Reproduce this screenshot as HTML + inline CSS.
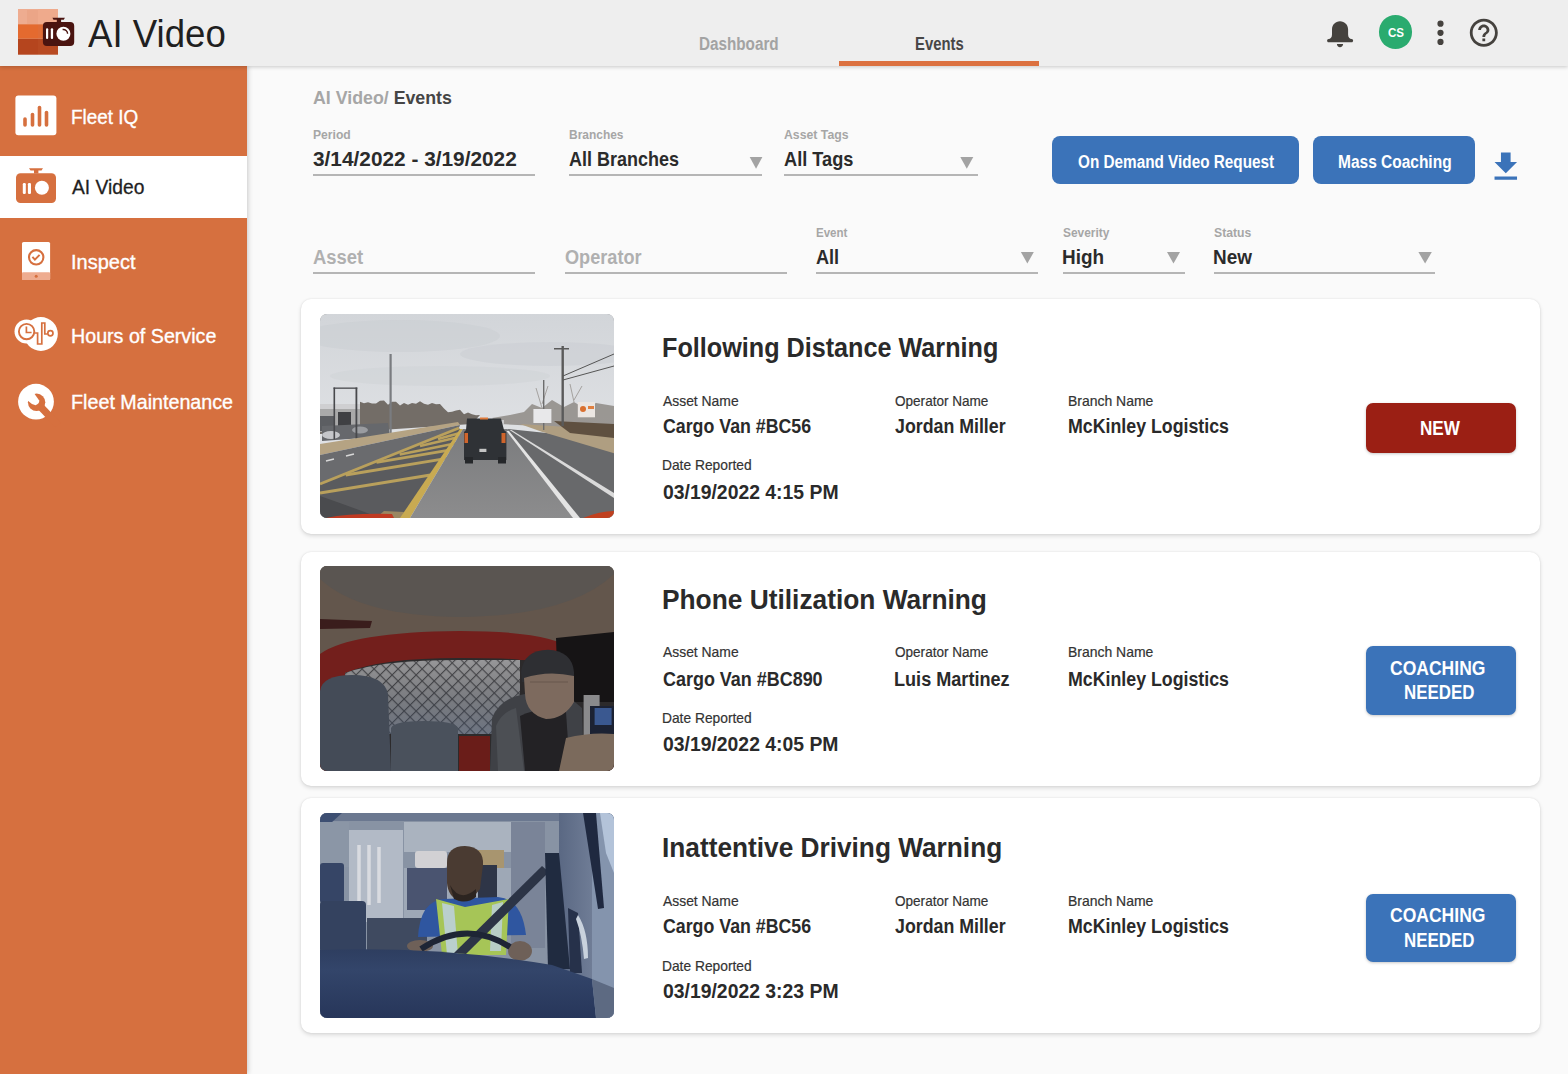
<!DOCTYPE html>
<html><head><meta charset="utf-8">
<style>
*{box-sizing:border-box;margin:0;padding:0}
html,body{width:1568px;height:1074px;overflow:hidden;background:#fafafa;font-family:"Liberation Sans",sans-serif;position:relative}
.a{position:absolute}
.t{position:absolute;white-space:nowrap;line-height:1;transform-origin:0 0;z-index:10}
svg.a{overflow:visible}
#hdr{left:0;top:0;width:1568px;height:66px;background:#eeeeee;box-shadow:0 1px 4px rgba(0,0,0,.2);z-index:3}
#side{left:0;top:66px;width:247px;height:1008px;background:#d6703f;box-shadow:1px 0 5px rgba(0,0,0,.2);z-index:2}
.ul{position:absolute;height:2px;background:#b5b5b5}
.card{position:absolute;left:301px;width:1239px;background:#fff;border-radius:10px;box-shadow:0 2px 4px rgba(0,0,0,.13),0 0 2px rgba(0,0,0,.1)}
.img{position:absolute;left:320px;width:294px;height:204px;border-radius:7px;overflow:hidden;z-index:5}
.btn{position:absolute;border-radius:7px;box-shadow:0 1px 3px rgba(0,0,0,.22);z-index:5}
</style></head><body>
<div id="hdr" class="a">
  <!-- logo -->
  <svg class="a" style="left:0;top:0" width="90" height="66" viewBox="0 0 90 66">
    <rect x="18" y="9" width="20" height="15.2" fill="#eeac90"/>
    <rect x="38" y="9" width="20" height="15.2" fill="#efaa8c"/>
    <rect x="27" y="10" width="11" height="14" fill="#e9a082" opacity=".6"/>
    <rect x="18" y="24.2" width="20" height="14.6" fill="#e46a2f"/>
    <rect x="38" y="24.2" width="20" height="14.6" fill="#e06c36"/>
    <rect x="18" y="38.8" width="20" height="15.9" fill="#b5451e"/>
    <rect x="38" y="38.8" width="20" height="15.9" fill="#b84a22"/>
    <path d="M52.4 17.8 H64.9 L63.8 19.8 H61.1 V22.5 H56.8 V19.8 H53.5 Z" fill="#4a1410"/>
    <rect x="42.9" y="21.9" width="31.3" height="24.1" rx="4" fill="#4a1410"/>
    <rect x="46" y="28.3" width="2.2" height="10.7" rx="1" fill="#fff"/>
    <rect x="50.8" y="28.3" width="2.3" height="10.7" rx="1" fill="#fff"/>
    <circle cx="63.4" cy="33.8" r="7" fill="#fff"/>
    <path d="M62.6 29.5 A4.3 4.3 0 0 1 67.6 33.8" stroke="#4a1410" stroke-width="1.4" fill="none"/>
  </svg>
  <div class="a" style="left:839px;top:61px;width:200px;height:5px;background:#dc7140"></div>
  <!-- bell -->
  <svg class="a" style="left:1320px;top:15px" width="40" height="37" viewBox="0 0 40 37">
    <path d="M20,6.2 C15.3,6.2 12,9.8 12,14.5 L12,19.5 C12,22.5 10.5,23.8 8.6,24.1 C7.6,24.3 7.1,25 7.1,25.7 C7.1,26.5 7.7,27.2 8.5,27.2 L31.7,27.2 C32.5,27.2 33.1,26.5 33.1,25.7 C33.1,25 32.6,24.3 31.6,24.1 C29.7,23.8 28.1,22.5 28.1,19.5 L28.1,14.5 C28.1,9.8 24.7,6.2 20,6.2 Z M16.9,29.1 L23.1,29.1 C23.1,31 21.7,32.2 20,32.2 C18.3,32.2 16.9,31 16.9,29.1 Z" fill="#45423e"/>
  </svg>
  <!-- avatar -->
  <div class="a" style="left:1378.8px;top:15.2px;width:33.6px;height:33.6px;border-radius:50%;background:#2aab6f"></div>
  <!-- dots -->
  <svg class="a" style="left:1430px;top:15px" width="22" height="36" viewBox="0 0 22 36">
    <circle cx="10.5" cy="8.7" r="3.1" fill="#45423e"/><circle cx="10.5" cy="17.8" r="3.1" fill="#45423e"/><circle cx="10.5" cy="26.9" r="3.1" fill="#45423e"/>
  </svg>
  <!-- help -->
  <svg class="a" style="left:1466.7px;top:16.4px" width="33.6" height="33.6" viewBox="0 0 24 24">
    <path fill="#45423e" d="M11 18h2v-2h-2v2zm1-16C6.48 2 2 6.48 2 12s4.48 10 10 10 10-4.48 10-10S17.52 2 12 2zm0 18c-4.41 0-8-3.59-8-8s3.59-8 8-8 8 3.59 8 8-3.59 8-8 8zm0-14c-2.21 0-4 1.79-4 4h2c0-1.1.9-2 2-2s2 .9 2 2c0 2-3 1.75-3 5h2c0-2.25 3-2.5 3-5 0-2.21-1.79-4-4-4z"/>
  </svg>
</div>

<div id="side" class="a"></div>
<div class="a" style="left:0;top:156px;width:247px;height:62px;background:#fff;z-index:4"></div>
<svg class="a" style="left:0;top:66px;z-index:6" width="247" height="400" viewBox="0 66 247 400">
  <!-- Fleet IQ -->
  <rect x="15.4" y="95.4" width="41" height="39.8" rx="3" fill="#fff"/>
  <g stroke="#d6703f" stroke-width="3.6" stroke-linecap="round">
    <line x1="25" y1="119" x2="25" y2="125"/>
    <line x1="32.5" y1="114.6" x2="32.5" y2="125"/>
    <line x1="39.5" y1="107.6" x2="39.5" y2="125"/>
    <line x1="46.5" y1="112.5" x2="46.5" y2="125"/>
  </g>
  <!-- AI video (orange on white) -->
  <path d="M29 168.2 H43 L41.5 170.6 H38.4 V173.6 H34 V170.6 H30.5 Z" fill="#d6703f"/>
  <rect x="16" y="173.3" width="40" height="29.7" rx="4.5" fill="#d6703f"/>
  <rect x="22.8" y="183" width="3" height="11" rx="1.2" fill="#fff"/>
  <rect x="27.9" y="183" width="3.1" height="11" rx="1.2" fill="#fff"/>
  <circle cx="41.9" cy="187.8" r="7" fill="#fff"/>
  <!-- Inspect -->
  <rect x="22" y="242" width="28.1" height="37.9" rx="1.6" fill="#fff"/>
  <rect x="22" y="272.2" width="28.1" height="7.7" rx="1" fill="#eeac90"/>
  <circle cx="36.2" cy="276.2" r="1.5" fill="#d6703f"/>
  <circle cx="36.2" cy="257.3" r="7.2" stroke="#d6703f" stroke-width="2.1" fill="none"/>
  <path d="M32.4 256.9 L34.9 259.6 L39.6 254.9" stroke="#d6703f" stroke-width="2" fill="none"/>
  <!-- Hours of service -->
  <circle cx="26.5" cy="331.6" r="12" fill="#fff"/>
  <circle cx="40.9" cy="334" r="16.9" fill="#fff"/>
  <circle cx="26.6" cy="331.6" r="7.7" stroke="#d6703f" stroke-width="1.9" fill="none"/>
  <path d="M26.4 326.6 V332.5 H31.6" stroke="#d6703f" stroke-width="1.7" fill="none"/>
  <path d="M34.2 333 H37.6 V344 H41.8 V323 H44.8 V334 H47.2" stroke="#d6703f" stroke-width="1.7" fill="none"/>
  <circle cx="50.4" cy="333.3" r="2.6" stroke="#d6703f" stroke-width="1.7" fill="none"/>
  <!-- Wrench -->
  <circle cx="36" cy="401.7" r="17.9" fill="#fff"/>
  <path d="M37 403 L58 425" stroke="#d6703f" stroke-width="7.4"/>
  <circle cx="36.6" cy="402.3" r="8.7" fill="#d6703f"/>
  <path d="M30.5 390 L34.6 394.1 L39.2 400.6 Q39.6 403.6 35.6 405.3 Q31 404 27.9 400.7 L24 396.5 Z" fill="#fff"/>
</svg>

<!-- filters: underlines & arrows -->
<div class="ul" style="left:313px;top:174.2px;width:222.2px"></div>
<div class="ul" style="left:569px;top:174.2px;width:193.4px"></div>
<div class="ul" style="left:784.3px;top:174.2px;width:193.3px"></div>
<div class="ul" style="left:312.8px;top:272.4px;width:222.5px"></div>
<div class="ul" style="left:564.7px;top:272.4px;width:222.2px"></div>
<div class="ul" style="left:816px;top:272.4px;width:222px"></div>
<div class="ul" style="left:1062.7px;top:272.4px;width:122px"></div>
<div class="ul" style="left:1213.7px;top:272.4px;width:221.7px"></div>
<svg class="a" style="left:0;top:0" width="1568" height="290">
  <g fill="#a3a3a3">
    <path d="M749.7 157 H762.4 L756.05 168.8 Z"/>
    <path d="M960.3 157 H973.3 L966.8 168.8 Z"/>
    <path d="M1020.9 252 H1033.8 L1027.35 263.6 Z"/>
    <path d="M1167 252 H1180 L1173.5 263.6 Z"/>
    <path d="M1418.4 252 H1431.8 L1425.1 263.6 Z"/>
  </g>
  <path fill="#3b73b9" transform="translate(1486.5 147.6) scale(1.607)" d="M19 9h-4V3H9v6H5l7 7 7-7zM5 18v2h14v-2H5z"/>
</svg>
<div class="btn" style="left:1052.4px;top:136.3px;width:246.3px;height:48.1px;background:#3b73b9;box-shadow:none;border-radius:8px"></div>
<div class="btn" style="left:1313.3px;top:136.3px;width:162px;height:48.1px;background:#3b73b9;box-shadow:none;border-radius:8px"></div>

<!-- cards -->
<div class="card" style="top:298.8px;height:235px"></div>
<div class="card" style="top:552px;height:234px"></div>
<div class="card" style="top:798.1px;height:234.8px"></div>
<div class="img" id="img1" style="top:313.8px;height:204.5px;background:#8a8c8e"><svg width="294" height="204" viewBox="0 0 294 204" style="display:block">
<defs>
<linearGradient id="p1sky" x1="0" y1="0" x2="0" y2="1"><stop offset="0" stop-color="#d2d5d9"/><stop offset=".6" stop-color="#dfe1e4"/><stop offset="1" stop-color="#e6e7ea"/></linearGradient>
<linearGradient id="p1lane" x1="0" y1="0" x2="0" y2="1"><stop offset="0" stop-color="#7b7c7e"/><stop offset="1" stop-color="#8c8c8d"/></linearGradient>
</defs>
<rect width="294" height="204" fill="url(#p1sky)"/>
<ellipse cx="80" cy="22" rx="100" ry="16" fill="#cacdd2" opacity=".5"/>
<ellipse cx="230" cy="40" rx="90" ry="12" fill="#cbced3" opacity=".6"/>
<ellipse cx="120" cy="62" rx="110" ry="10" fill="#d0d3d7" opacity=".6"/>
<!-- tree line left -->
<path d="M40 100 L40 87.7 L44 89.2 L48 88.3 L52 89.5 L56 89.6 L60 86.8 L64 86.6 L68 90.7 L72 87.8 L76 87.7 L80 91.5 L84 88.9 L88 90.7 L92 88.9 L96 89.7 L100 87.3 L104 89.7 L108 90.8 L112 89.1 L116 90.2 L120 89.9 L124 94.4 L128 98.2 L132 97.7 L136 96.6 L140 95.7 L144 100.2 L148 98.6 L152 100.2 L156 101.3 L160 100.9 L152 110 L0 120 L0 100 Z" fill="#736d67"/>
<!-- trees right (sparse) -->
<path d="M172 104 L190 101 L204 98 L212 90 L222 94 L232 86 L244 93 L254 88 L264 94 L276 89 L294 92 L294 116 L180 110 Z" fill="#8a857f" opacity=".8"/>
<g stroke="#8f8a85" stroke-width="1" opacity=".7"><path d="M222 94 L216 74 M222 90 L228 72 M254 88 L250 70 M254 86 L262 72"/></g>
<!-- left building -->
<rect x="0" y="90" width="40" height="28" fill="#a9a9a9"/>
<rect x="0" y="90" width="40" height="5" fill="#cfcfd1"/>
<rect x="18" y="98" width="13" height="17" fill="#3f4043"/>
<rect x="0" y="102" width="14" height="15" fill="#5c5e62"/>
<!-- parked cars -->
<path d="M2 112 L68 109 L70 122 L2 127 Z" fill="#66686c"/>
<ellipse cx="11" cy="121" rx="9" ry="4" fill="#c5c6ca"/>
<ellipse cx="40" cy="116" rx="8" ry="3.5" fill="#9a9ca0"/>
<!-- sign frame & poles -->
<rect x="13.5" y="73.5" width="1.6" height="52" fill="#48494c"/>
<rect x="35.5" y="73.5" width="1.8" height="52" fill="#48494c"/>
<rect x="13.5" y="73.5" width="23.8" height="1.3" fill="#48494c"/>
<rect x="69.5" y="40" width="2.2" height="79" fill="#7a7c80"/>
<!-- left sidewalk -->
<path d="M0 130 L138 108 L140 111 L0 141 Z" fill="#b5a383"/>
<!-- left lane -->
<path d="M0 141 L140 111 L139 114 L0 170 Z" fill="#6a6b6e"/>
<g stroke="#d8d8d8" stroke-width="1.4"><line x1="6" y1="147" x2="14" y2="145"/><line x1="26" y1="142" x2="34" y2="140"/></g>
<!-- hatch area -->
<path d="M0 170 L139 114 L141 117 L84 204 L0 204 Z" fill="#5a5b5e"/>
<path d="M0 182 Q40 196 60 204 L0 204 Z" fill="#4a4b4e"/>
<g stroke="#b9a05c" stroke-width="2.8" fill="none">
<line x1="0" y1="170" x2="139" y2="114"/>
<line x1="0" y1="179" x2="110.5" y2="161"/>
<line x1="25.7" y1="161" x2="127" y2="144.4"/>
<line x1="56.5" y1="148.3" x2="133.7" y2="135.4"/>
<line x1="79.7" y1="140.5" x2="137.5" y2="129"/>
<line x1="100" y1="132" x2="139" y2="123"/>
<line x1="118" y1="125" x2="140" y2="119"/>
</g>
<path d="M56 204 L64 197 L84 198 L82 204 Z" fill="#b59a62" opacity=".7"/>
<!-- double yellow -->
<path d="M140 115 L143 115 L90 204 L80 204 Z" fill="#c8aa52"/>
<!-- own lane -->
<path d="M143 115 L187 115 L257 204 L90 204 Z" fill="url(#p1lane)"/>
<!-- right lanes -->
<path d="M187 115 L294 126 L294 204 L257 204 Z" fill="#68696b"/>
<path d="M186.5 117 L189 117 L260 204 L253 204 Z" fill="#e4e4e4"/>
<path d="M189.5 116 L191.5 116 L294 179 L294 184 Z" fill="#dadada"/>
<!-- right shoulder -->
<path d="M200 110 L294 116 L294 139.3 L221 117.4 Z" fill="#af9e81"/>
<path d="M234 107 L294 110 L294 124 L250 119 Z" fill="#5f5040"/>
<!-- poles right -->
<rect x="241.5" y="32" width="2.4" height="80" fill="#5a5a5a"/>
<rect x="234" y="34" width="15" height="1.5" fill="#5a5a5a"/>
<rect x="223" y="66" width="1.4" height="50" fill="#6d6d6d"/>
<path d="M243 62 L294 40 M243 66 L294 52" stroke="#555" stroke-width="1" fill="none"/>
<!-- white truck / sign -->
<rect x="213.4" y="95" width="18" height="14" fill="#e8e8ea"/>
<rect x="257.8" y="88" width="17.2" height="15.3" fill="#ebe6e2"/>
<circle cx="263" cy="95" r="3" fill="#d9702f"/>
<rect x="268" y="92" width="6" height="3" fill="#e08040"/>
<!-- far vehicles -->
<rect x="176" y="106" width="8" height="4" fill="#c9c9cb"/>
<!-- truck -->
<path d="M147 104.6 L181 104.6 L184 116 L186.4 118 L186.4 146 L144 146 L144 118 L146 116 Z" fill="#2f3236"/>
<rect x="145" y="143" width="8" height="6.5" fill="#25272a"/>
<rect x="178" y="143" width="8" height="6.5" fill="#25272a"/>
<rect x="144.5" y="119" width="3.5" height="10" fill="#d0652c"/>
<rect x="181.5" y="119" width="4" height="10" fill="#d0652c"/>
<rect x="159.4" y="134.8" width="7" height="3.2" fill="#c4c4c4"/>
<rect x="160" y="103.5" width="8" height="2" fill="#e07a3a"/>
<!-- dashboard edges -->
<path d="M6 204 Q30 199 72 200 L74 204 Z" fill="#c03a22"/>
<path d="M263 204 Q280 197 294 197 L294 204 Z" fill="#c0401f"/>
</svg></div>
<div class="img" id="img2" style="top:566px;height:205px;background:#4a4642"><svg width="294" height="205" viewBox="0 0 294 205" style="display:block">
<defs>
<pattern id="mesh" width="8.5" height="8.5" patternUnits="userSpaceOnUse" patternTransform="rotate(45)">
<rect width="8.5" height="8.5" fill="#979799"/><path d="M0 0 H8.5 M0 0 V8.5" stroke="#4a4a4d" stroke-width="2.2"/>
</pattern>
<linearGradient id="p2m" x1="0" y1="0" x2="0" y2="1"><stop offset="0" stop-color="#000" stop-opacity="0"/><stop offset="1" stop-color="#3a4a66" stop-opacity=".45"/></linearGradient>
</defs>
<rect width="294" height="205" fill="#63564c"/>
<path d="M0 0 H294 V8 Q250 50 140 51 Q40 50 0 13 Z" fill="#5a5551"/>
<path d="M0 53 L52 55 L50 62 L0 63 Z" fill="#3a1d1c"/>
<path d="M0 88 Q30 66 140 65 Q230 65 254 84 L294 84 L294 205 L0 205 Z" fill="#731f1c"/>
<path d="M25 205 L25 107 Q60 92 140 92 Q190 92 200 94 L294 96 L294 205 Z" fill="#2c2a2b"/>
<path d="M25 168 L25 107 Q60 94 140 94 L200 94 L200 168 Z" fill="url(#mesh)"/>
<path d="M25 168 L25 107 Q60 94 140 94 L200 94 L200 168 Z" fill="url(#p2m)"/>
<path d="M0 205 L0 125 Q2 109 32 109 Q64 109 68 128 L71 205 Z" fill="#444b57"/>
<path d="M71 205 L71 162 Q74 155 104 155 Q135 155 138 162 L138 205 Z" fill="#4a515c"/>
<rect x="139" y="170" width="31" height="35" fill="#6a1d19"/>
<path d="M236 72 L294 66 L294 136 L238 136 Z" fill="#161415"/>
<path d="M170 205 L172 152 Q180 132 205 128 L250 132 L262 142 L264 205 Z" fill="#3f4146"/>
<path d="M200 150 Q220 140 246 146 L250 205 L205 205 Z" fill="#232225"/>
<path d="M176 160 Q182 146 196 142 L204 205 L178 205 Z" fill="#4c4f54"/>
<path d="M201 106 Q204 84 228 83.8 Q252 85 254 106 L254 116 L202 116 Z" fill="#2e2f33"/>
<path d="M204 112 Q228 104 254 110 L254 136 Q244 153 226 153 Q206 148 205 128 Z" fill="#7d6a5e"/>
<path d="M210 116 H248" stroke="#5a4a42" stroke-width="1" opacity=".6"/>
<rect x="263.6" y="129" width="16" height="42.5" fill="#8a8a8c"/>
<rect x="270" y="140" width="24" height="34" fill="#1c2233"/>
<rect x="274.6" y="142" width="17" height="17" fill="#3a5890"/>
<path d="M239 205 L246 172 Q270 166 294 168 L294 205 Z" fill="#7b6a5c"/>
</svg></div>
<div class="img" id="img3" style="top:813px;height:205px;background:#3a4a66"><svg width="294" height="205" viewBox="0 0 294 205" style="display:block">
<defs>
<linearGradient id="p3dash" x1="0" y1="0" x2="0" y2="1"><stop offset="0" stop-color="#2e3e60"/><stop offset=".3" stop-color="#33456a"/><stop offset="1" stop-color="#27365a"/></linearGradient>
<linearGradient id="p3r" x1="0" y1="0" x2="1" y2="0"><stop offset="0" stop-color="#5a6883"/><stop offset="1" stop-color="#7d8aa2"/></linearGradient>
</defs>
<rect width="294" height="205" fill="#8893a4"/>
<rect width="294" height="8" fill="#6b7890"/><path d="M0 0 L22 0 L0 20 Z" fill="#3d4f72"/>
<rect x="0" y="9" width="29" height="45" fill="#8b96a6"/>
<rect x="29" y="17" width="54" height="92" fill="#b2bac6"/>
<g stroke="#d9dbe0" stroke-width="3.5"><line x1="39" y1="32" x2="39" y2="90"/><line x1="49" y1="32" x2="49" y2="92"/><line x1="59" y1="34" x2="59" y2="90"/></g>
<rect x="84" y="9" width="108" height="30" fill="#aab3bf"/>
<rect x="95" y="38" width="32" height="17" rx="3" fill="#d2d1d4"/>
<rect x="158" y="37" width="26" height="48" fill="#a8956f"/>
<rect x="84" y="55" width="108" height="50" fill="#9ea8b6"/>
<rect x="0" y="50" width="24" height="40" rx="3" fill="#364566"/>
<rect x="0" y="88" width="46" height="52" rx="4" fill="#34425f"/>
<rect x="47" y="105" width="60" height="35" fill="#3f4a60"/>
<rect x="87" y="55" width="40" height="42" fill="#4a5470"/>
<rect x="158" y="52" width="19" height="34" fill="#2e3547"/>
<rect x="191" y="9" width="34" height="126" fill="#7a8498"/>
<path d="M98 124 Q100 88 124 86 L178 84 Q202 86 206 122 Z" fill="#2f56a0"/>
<path d="M116 86 L145 94 L189 86 L186 142 L122 142 Z" fill="#a6c557"/>
<path d="M122 90 L134 93 L138 142 L127 142 Z" fill="#bdd0e2" opacity=".85"/>
<path d="M172 92 L183 89 L181 138 L170 138 Z" fill="#bdd0e2" opacity=".8"/>
<path d="M127 50 Q127 33 145 33 Q164 34 163 52 L160 76 Q150 90 140 88 Q128 84 127 70 Z" fill="#4a3b32"/>
<path d="M130 72 Q140 90 156 76 L156 84 Q146 92 134 86 Z" fill="#2c2420"/>
<path d="M222 53 L229 59 L146 141 L134 140 Z" fill="#2c3446"/>
<ellipse cx="100" cy="133" rx="13" ry="6" fill="#6e6058"/>
<ellipse cx="200" cy="138" rx="12" ry="10" fill="#6e6058"/>
<path d="M101 136 Q146 106 190 134" stroke="#1e2535" stroke-width="6" fill="none"/>
<rect x="239" y="0" width="55" height="205" fill="url(#p3r)"/>
<rect x="272" y="0" width="22" height="205" fill="#8494ad"/>
<path d="M263 0 L276 0 L284 95 L278 96 Z" fill="#1f2940"/>
<path d="M280 0 L294 0 L294 60 L286 40 Z" fill="#b3c3d9"/>
<path d="M225 40 L239 40 L250 156 L228 156 Z" fill="#202b40"/>
<path d="M248 95 L258 100 L262 160 L250 160 Z" fill="#26314a"/>
<path d="M258 102 Q268 118 268 145 L264 146 Q262 122 256 106 Z" fill="#c9d2dd"/>
<path d="M0 205 L0 137 Q120 133 232 152 L272 166 L276 205 Z" fill="url(#p3dash)"/>
<path d="M272 166 L294 175 L294 205 L276 205 Z" fill="#5d6a82"/>
</svg></div>
<div class="btn" style="left:1366.4px;top:403.2px;width:149.8px;height:50.2px;background:#9b1f14"></div>
<div class="btn" style="left:1366.4px;top:646.2px;width:149.6px;height:68.9px;background:#3b73b9"></div>
<div class="btn" style="left:1366.4px;top:893.5px;width:149.6px;height:68.8px;background:#3b73b9"></div>

<div class="t" style="left:88px;top:13.52px;font-size:39.28px;font-weight:400;color:#1f1f1f;transform:scaleX(0.9327);">AI Video</div>
<div class="t" style="left:699.44px;top:36.17px;font-size:17.68px;font-weight:700;color:#a3a3a3;transform:scaleX(0.8629);">Dashboard</div>
<div class="t" style="left:915.16px;top:36.17px;font-size:17.68px;font-weight:700;color:#474747;transform:scaleX(0.8403);">Events</div>
<div class="t" style="left:1387.9px;top:26.19px;font-size:13.48px;font-weight:700;color:#ffffff;transform:scaleX(0.8597);">CS</div>
<div class="t" style="left:71.07px;top:106.75px;font-size:20.29px;font-weight:400;color:#ffffff;transform:scaleX(0.9315);-webkit-text-stroke:0.35px #ffffff;">Fleet IQ</div>
<div class="t" style="left:72px;top:176.71px;font-size:20.58px;font-weight:400;color:#1f1f1f;transform:scaleX(0.9360);-webkit-text-stroke:0.3px #1f1f1f;">AI Video</div>
<div class="t" style="left:70.71px;top:251.88px;font-size:20.14px;font-weight:400;color:#ffffff;transform:scaleX(0.9939);-webkit-text-stroke:0.35px #ffffff;">Inspect</div>
<div class="t" style="left:71.11px;top:326.87px;font-size:19.86px;font-weight:400;color:#ffffff;transform:scaleX(0.9901);-webkit-text-stroke:0.35px #ffffff;">Hours of Service</div>
<div class="t" style="left:71.1px;top:392.55px;font-size:19.71px;font-weight:400;color:#ffffff;-webkit-text-stroke:0.35px #ffffff;">Fleet Maintenance</div>
<div class="t" style="left:313.3px;top:88.24px;font-size:19.13px;font-weight:700;color:#a6a6a6;transform:scaleX(0.9297);">AI Video/ <span style="color:#454545">Events</span></div>
<div class="t" style="left:313px;top:127.57px;font-size:13.33px;font-weight:700;color:#a6a6a6;transform:scaleX(0.9097);">Period</div>
<div class="t" style="left:313px;top:148.83px;font-size:20.43px;font-weight:700;color:#2b2b2b;transform:scaleX(1.0196);">3/14/2022 - 3/19/2022</div>
<div class="t" style="left:569px;top:127.57px;font-size:13.33px;font-weight:700;color:#a6a6a6;transform:scaleX(0.8967);">Branches</div>
<div class="t" style="left:569px;top:148.83px;font-size:20.43px;font-weight:700;color:#2b2b2b;transform:scaleX(0.8812);">All Branches</div>
<div class="t" style="left:784.3px;top:127.57px;font-size:13.33px;font-weight:700;color:#a6a6a6;transform:scaleX(0.9210);">Asset Tags</div>
<div class="t" style="left:784.3px;top:148.83px;font-size:20.43px;font-weight:700;color:#2b2b2b;transform:scaleX(0.8909);">All Tags</div>
<div class="t" style="left:1078.1px;top:154.14px;font-size:17.54px;font-weight:700;color:#ffffff;transform:scaleX(0.8728);">On Demand Video Request</div>
<div class="t" style="left:1338.12px;top:154.14px;font-size:17.54px;font-weight:700;color:#ffffff;transform:scaleX(0.8834);">Mass Coaching</div>
<div class="t" style="left:312.8px;top:246.68px;font-size:20.72px;font-weight:700;color:#b0b0b0;transform:scaleX(0.8898);">Asset</div>
<div class="t" style="left:564.7px;top:246.68px;font-size:20.72px;font-weight:700;color:#b0b0b0;transform:scaleX(0.8749);">Operator</div>
<div class="t" style="left:816px;top:225.81px;font-size:13.04px;font-weight:700;color:#a6a6a6;transform:scaleX(0.8853);">Event</div>
<div class="t" style="left:816px;top:247.43px;font-size:20.72px;font-weight:700;color:#2b2b2b;transform:scaleX(0.8748);">All</div>
<div class="t" style="left:1062.7px;top:225.81px;font-size:13.04px;font-weight:700;color:#a6a6a6;transform:scaleX(0.9152);">Severity</div>
<div class="t" style="left:1061.79px;top:247.43px;font-size:20.72px;font-weight:700;color:#2b2b2b;transform:scaleX(0.9127);">High</div>
<div class="t" style="left:1213.7px;top:225.81px;font-size:13.04px;font-weight:700;color:#a6a6a6;transform:scaleX(0.9349);">Status</div>
<div class="t" style="left:1212.79px;top:247.43px;font-size:20.72px;font-weight:700;color:#2b2b2b;transform:scaleX(0.9133);">New</div>
<div class="t" style="left:661.91px;top:333.43px;font-size:28.26px;font-weight:700;color:#2a2a2a;transform:scaleX(0.8916);">Following Distance Warning</div>
<div class="t" style="left:662.5px;top:393.53px;font-size:14.78px;font-weight:400;color:#333333;transform:scaleX(0.9401);-webkit-text-stroke:0.2px #333333;">Asset Name</div>
<div class="t" style="left:662.7px;top:415.9px;font-size:20px;font-weight:700;color:#2a2a2a;transform:scaleX(0.8883);">Cargo Van #BC56</div>
<div class="t" style="left:895px;top:393.53px;font-size:14.78px;font-weight:400;color:#333333;transform:scaleX(0.9178);-webkit-text-stroke:0.2px #333333;">Operator Name</div>
<div class="t" style="left:895px;top:415.9px;font-size:20px;font-weight:700;color:#2a2a2a;transform:scaleX(0.8886);">Jordan Miller</div>
<div class="t" style="left:1067.75px;top:393.53px;font-size:14.78px;font-weight:400;color:#333333;transform:scaleX(0.9454);-webkit-text-stroke:0.2px #333333;">Branch Name</div>
<div class="t" style="left:1067.81px;top:415.9px;font-size:20px;font-weight:700;color:#2a2a2a;transform:scaleX(0.8887);">McKinley Logistics</div>
<div class="t" style="left:661.57px;top:457.98px;font-size:14.78px;font-weight:400;color:#333333;transform:scaleX(0.9333);-webkit-text-stroke:0.2px #333333;">Date Reported</div>
<div class="t" style="left:662.7px;top:481.75px;font-size:20px;font-weight:700;color:#2a2a2a;transform:scaleX(0.9685);">03/19/2022 4:15 PM</div>
<div class="t" style="left:661.87px;top:585.18px;font-size:28.26px;font-weight:700;color:#2a2a2a;transform:scaleX(0.9312);">Phone Utilization Warning</div>
<div class="t" style="left:662.5px;top:645.03px;font-size:14.78px;font-weight:400;color:#333333;transform:scaleX(0.9401);-webkit-text-stroke:0.2px #333333;">Asset Name</div>
<div class="t" style="left:662.7px;top:668.8px;font-size:20px;font-weight:700;color:#2a2a2a;transform:scaleX(0.8974);">Cargo Van #BC890</div>
<div class="t" style="left:895px;top:645.03px;font-size:14.78px;font-weight:400;color:#333333;transform:scaleX(0.9178);-webkit-text-stroke:0.2px #333333;">Operator Name</div>
<div class="t" style="left:894.1px;top:668.8px;font-size:20px;font-weight:700;color:#2a2a2a;transform:scaleX(0.9046);">Luis Martinez</div>
<div class="t" style="left:1067.75px;top:645.03px;font-size:14.78px;font-weight:400;color:#333333;transform:scaleX(0.9454);-webkit-text-stroke:0.2px #333333;">Branch Name</div>
<div class="t" style="left:1067.81px;top:668.8px;font-size:20px;font-weight:700;color:#2a2a2a;transform:scaleX(0.8887);">McKinley Logistics</div>
<div class="t" style="left:661.57px;top:711.03px;font-size:14.78px;font-weight:400;color:#333333;transform:scaleX(0.9333);-webkit-text-stroke:0.2px #333333;">Date Reported</div>
<div class="t" style="left:662.7px;top:733.85px;font-size:20px;font-weight:700;color:#2a2a2a;transform:scaleX(0.9680);">03/19/2022 4:05 PM</div>
<div class="t" style="left:661.87px;top:833.48px;font-size:28.26px;font-weight:700;color:#2a2a2a;transform:scaleX(0.9289);">Inattentive Driving Warning</div>
<div class="t" style="left:662.5px;top:894.03px;font-size:14.78px;font-weight:400;color:#333333;transform:scaleX(0.9401);-webkit-text-stroke:0.2px #333333;">Asset Name</div>
<div class="t" style="left:662.7px;top:915.7px;font-size:20px;font-weight:700;color:#2a2a2a;transform:scaleX(0.8883);">Cargo Van #BC56</div>
<div class="t" style="left:895px;top:894.03px;font-size:14.78px;font-weight:400;color:#333333;transform:scaleX(0.9178);-webkit-text-stroke:0.2px #333333;">Operator Name</div>
<div class="t" style="left:895px;top:915.7px;font-size:20px;font-weight:700;color:#2a2a2a;transform:scaleX(0.8886);">Jordan Miller</div>
<div class="t" style="left:1067.75px;top:894.03px;font-size:14.78px;font-weight:400;color:#333333;transform:scaleX(0.9454);-webkit-text-stroke:0.2px #333333;">Branch Name</div>
<div class="t" style="left:1067.81px;top:915.7px;font-size:20px;font-weight:700;color:#2a2a2a;transform:scaleX(0.8887);">McKinley Logistics</div>
<div class="t" style="left:661.57px;top:959.23px;font-size:14.78px;font-weight:400;color:#333333;transform:scaleX(0.9333);-webkit-text-stroke:0.2px #333333;">Date Reported</div>
<div class="t" style="left:662.7px;top:980.8px;font-size:20px;font-weight:700;color:#2a2a2a;transform:scaleX(0.9685);">03/19/2022 3:23 PM</div>
<div class="t" style="left:1420.34px;top:418.62px;font-size:19.86px;font-weight:700;color:#ffffff;transform:scaleX(0.8625);">NEW</div>
<div class="t" style="left:1390px;top:657.75px;font-size:20.29px;font-weight:700;color:#ffffff;transform:scaleX(0.8643);">COACHING</div>
<div class="t" style="left:1404.17px;top:682.25px;font-size:20.29px;font-weight:700;color:#ffffff;transform:scaleX(0.8331);">NEEDED</div>
<div class="t" style="left:1390px;top:905.05px;font-size:20.29px;font-weight:700;color:#ffffff;transform:scaleX(0.8643);">COACHING</div>
<div class="t" style="left:1404.17px;top:929.55px;font-size:20.29px;font-weight:700;color:#ffffff;transform:scaleX(0.8331);">NEEDED</div>
</body></html>
